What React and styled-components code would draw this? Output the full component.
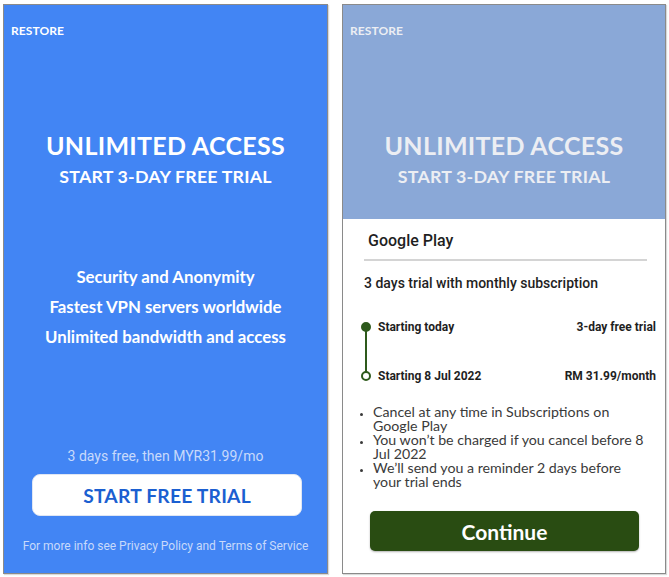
import React from "react";
import styled, { createGlobalStyle } from "styled-components";

const Global = createGlobalStyle`
  html, body { margin: 0; padding: 0; background: #ffffff; }
  body { font-family: "Lato", "Liberation Sans", sans-serif; }
  * { box-sizing: border-box; }
`;

const Page = styled.div`
  display: flex;
  gap: 14px;
  padding: 4px 0 0 3px;
  width: 669px;
  height: 577px;
`;

const Panel = styled.div`
  width: ${(p) => p.$w}px;
  height: 570px;
  border: 1px solid #8a8a8a;
  box-shadow: 1px 1px 1px rgba(0, 0, 0, 0.15);
  background: ${(p) => p.$bg};
  display: flex;
  flex-direction: column;
  overflow: hidden;
`;

const Hero = styled.div`
  background: ${(p) => p.$bg};
  color: ${(p) => p.$fg};
  display: flex;
  flex-direction: column;
  align-items: center;
  height: ${(p) => (p.$h ? `${p.$h}px` : "auto")};
  flex: ${(p) => (p.$h ? "none" : "1")};
`;

const Restore = styled.div`
  align-self: flex-start;
  margin: 18px 0 0 7px;
  font-size: 12px;
  line-height: 16px;
  font-weight: 700;
  letter-spacing: 0.1px;
`;

const Title = styled.div`
  margin-top: 91px;
  font-size: 25px;
  line-height: 30px;
  font-weight: 700;
  letter-spacing: 0.3px;
`;

const Subtitle = styled.div`
  margin-top: 5px;
  font-size: 17.8px;
  line-height: 22px;
  font-weight: 700;
  letter-spacing: 0.2px;
`;

const Features = styled.div`
  margin-top: 80px;
  display: flex;
  flex-direction: column;
  align-items: center;
  gap: 10px;
  font-size: 16.8px;
  line-height: 20px;
  font-weight: 700;
`;

const Spacer = styled.div`
  flex: 1;
`;

const PriceNote = styled.div`
  font-family: "Roboto", sans-serif;
  font-size: 14px;
  line-height: 18px;
  color: #c8dafb;
`;

const TrialButton = styled.button`
  margin-top: 9px;
  margin-left: 3px;
  width: 270px;
  height: 42px;
  border: 1px solid #dfe6f3;
  border-radius: 8px;
  background: #ffffff;
  color: #1b5fd1;
  font-family: "Lato", sans-serif;
  font-size: 19.3px;
  font-weight: 700;
  letter-spacing: 0.2px;
`;

const Footer = styled.div`
  margin: 22px 0 19px;
  font-family: "Roboto", sans-serif;
  font-size: 12px;
  line-height: 16px;
  color: #c8dafb;
`;

const Sheet = styled.div`
  flex: 1;
  background: #ffffff;
  padding: 12px 10px 0 21px;
  display: flex;
  flex-direction: column;
  font-family: "Roboto", sans-serif;
  color: #1f1f1f;
`;

const SheetTitle = styled.div`
  padding-left: 4px;
  font-size: 16px;
  line-height: 20px;
  font-weight: 500;
`;

const Divider = styled.div`
  margin: 8px 8px 0 0;
  height: 2px;
  background: #d4d4d4;
`;

const PlanName = styled.div`
  margin-top: 13px;
  font-size: 14px;
  line-height: 18px;
  font-weight: 500;
`;

const Timeline = styled.div`
  margin-top: 26px;
  display: flex;
  flex-direction: column;
  gap: 31px;
  position: relative;
`;

const Rail = styled.div`
  position: absolute;
  left: 1px;
  top: 9px;
  width: 2px;
  height: 48px;
  background: #2e5a1c;
`;

const Step = styled.div`
  display: flex;
  align-items: center;
  gap: 7px;
  font-size: 12px;
  line-height: 18px;
  font-weight: 700;
  position: relative;
`;

const Dot = styled.span`
  width: 10px;
  height: 10px;
  margin-left: -3px;
  border-radius: 50%;
  flex: none;
  background: ${(p) => (p.$hollow ? "#ffffff" : "#2e5a1c")};
  border: 2px solid #2e5a1c;
`;

const StepLabel = styled.span`
  flex: 1;
`;

const StepValue = styled.span`
  font-weight: 700;
  margin-right: -1px;
`;

const Bullets = styled.ul`
  margin: 20px 0 0 0;
  padding: 0 5px 0 9px;
  list-style: disc;
  font-family: "Lato", sans-serif;
  font-size: 14.2px;
  line-height: 14px;
  color: #3a3a3a;
  li::marker { font-size: 10px; }
`;

const ContinueButton = styled.button`
  margin: 22px 0 0 6px;
  width: 269px;
  height: 40px;
  border: none;
  border-radius: 5px;
  background: #294c12;
  color: #ffffff;
  font-family: "Lato", sans-serif;
  font-size: 21px;
  font-weight: 700;
  box-shadow: 0 1px 2px rgba(0, 0, 0, 0.3);
`;

const HeroContent = () => (
  <>
    <Restore>RESTORE</Restore>
    <Title>UNLIMITED ACCESS</Title>
    <Subtitle>START 3-DAY FREE TRIAL</Subtitle>
  </>
);

export default function App() {
  return (
    <>
      <Global />
      <Page>
        <Panel $w={325} $bg="#4285f4">
          <Hero $bg="#4285f4" $fg="#ffffff">
            <HeroContent />
            <Features>
              <div>Security and Anonymity</div>
              <div>Fastest VPN servers worldwide</div>
              <div>Unlimited bandwidth and access</div>
            </Features>
            <Spacer />
            <PriceNote>3 days free, then MYR31.99/mo</PriceNote>
            <TrialButton>START FREE TRIAL</TrialButton>
            <Footer>For more info see Privacy Policy and Terms of Service</Footer>
          </Hero>
        </Panel>
        <Panel $w={324} $bg="#ffffff">
          <Hero $bg="#8aa8d7" $fg="#eceef3" $h={214}>
            <HeroContent />
          </Hero>
          <Sheet>
            <SheetTitle>Google Play</SheetTitle>
            <Divider />
            <PlanName>3 days trial with monthly subscription</PlanName>
            <Timeline>
              <Rail />
              <Step>
                <Dot />
                <StepLabel>Starting today</StepLabel>
                <StepValue>3-day free trial</StepValue>
              </Step>
              <Step>
                <Dot $hollow />
                <StepLabel>Starting 8 Jul 2022</StepLabel>
                <StepValue>RM 31.99/month</StepValue>
              </Step>
            </Timeline>
            <Bullets>
              <li>Cancel at any time in Subscriptions on Google Play</li>
              <li>You won’t be charged if you cancel before 8 Jul 2022</li>
              <li>We’ll send you a reminder 2 days before your trial ends</li>
            </Bullets>
            <ContinueButton>Continue</ContinueButton>
          </Sheet>
        </Panel>
      </Page>
    </>
  );
}
